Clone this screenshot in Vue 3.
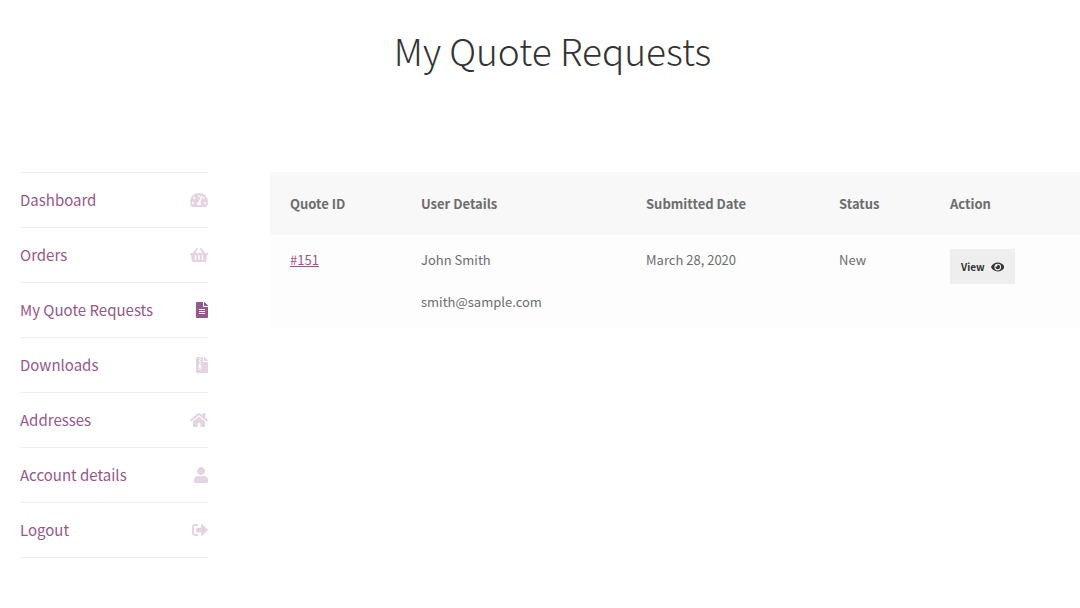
<script setup>
const links = [
  {
    label: 'Dashboard',
    width: 576,
    path: 'M288 32C128.940 32 0 160.940 0 320c0 52.800 14.250 102.260 39.060 144.800 5.610 9.620 16.300 15.200 27.440 15.200h443c11.140 0 21.830-5.580 27.440-15.200C561.750 422.260 576 372.800 576 320c0-159.060-128.940-288-288-288zm0 64c14.710 0 26.580 10.130 30.320 23.650-1.110 2.260-2.640 4.230-3.450 6.670l-9.220 27.670c-5.130 3.490-10.970 6.010-17.640 6.010-17.670 0-32-14.330-32-32S270.330 96 288 96zM96 384c-17.670 0-32-14.330-32-32s14.330-32 32-32 32 14.330 32 32-14.330 32-32 32zm48-160c-17.670 0-32-14.330-32-32s14.330-32 32-32 32 14.330 32 32-14.330 32-32 32zm246.770-72.410l-61.330 184C343.130 347.330 352 364.540 352 384c0 11.720-3.380 22.550-8.880 32H232.880c-5.500-9.450-8.880-20.280-8.880-32 0-33.940 26.500-61.430 59.900-63.590l61.340-184.010c4.170-12.560 17.730-19.450 30.360-15.170 12.570 4.190 19.350 17.790 15.170 30.360zm14.660 57.200l15.520-46.550c3.470-1.290 7.130-2.230 11.050-2.230 17.670 0 32 14.330 32 32s-14.330 32-32 32c-11.380-.010-20.890-6.280-26.570-15.220zM480 384c-17.670 0-32-14.330-32-32s14.330-32 32-32 32 14.330 32 32-14.330 32-32 32z',
  },
  {
    label: 'Orders',
    width: 576,
    path: 'M576 216v16c0 13.255-10.745 24-24 24h-8l-26.113 182.788C514.509 462.435 494.257 480 470.370 480H105.630c-23.887 0-44.139-17.565-47.518-41.212L32 256h-8c-13.255 0-24-10.745-24-24v-16c0-13.255 10.745-24 24-24h67.341l106.780-146.821c10.395-14.292 30.407-17.453 44.701-7.058 14.293 10.395 17.453 30.408 7.058 44.701L170.477 192h235.046L326.120 82.821c-10.395-14.292-7.234-34.306 7.059-44.701 14.291-10.395 34.306-7.235 44.701 7.058L484.659 192H552c13.255 0 24 10.745 24 24zM312 392V280c0-13.255-10.745-24-24-24s-24 10.745-24 24v112c0 13.255 10.745 24 24 24s24-10.745 24-24zm112 0V280c0-13.255-10.745-24-24-24s-24 10.745-24 24v112c0 13.255 10.745 24 24 24s24-10.745 24-24zm-224 0V280c0-13.255-10.745-24-24-24s-24 10.745-24 24v112c0 13.255 10.745 24 24 24s24-10.745 24-24z',
  },
  {
    label: 'My Quote Requests',
    width: 384,
    active: true,
    path: 'M224 136V0H24C10.700 0 0 10.700 0 24v464c0 13.300 10.700 24 24 24h336c13.300 0 24-10.700 24-24V160H248c-13.200 0-24-10.800-24-24zm64 236c0 6.600-5.400 12-12 12H108c-6.600 0-12-5.400-12-12v-8c0-6.600 5.400-12 12-12h168c6.600 0 12 5.400 12 12v8zm0-64c0 6.600-5.400 12-12 12H108c-6.600 0-12-5.400-12-12v-8c0-6.600 5.400-12 12-12h168c6.600 0 12 5.400 12 12v8zm0-72v8c0 6.600-5.400 12-12 12H108c-6.600 0-12-5.400-12-12v-8c0-6.600 5.400-12 12-12h168c6.600 0 12 5.400 12 12zm96-114.100v6.100H256V0h6.100c6.400 0 12.500 2.500 17 7l97.900 98c4.500 4.500 7 10.600 7 16.900z',
  },
  {
    label: 'Downloads',
    width: 384,
    path: 'M377 105L279.100 7c-4.500-4.500-10.600-7-17-7H256v128h128v-6.100c0-6.300-2.500-12.400-7-16.900zM128.400 336c-17.900 0-32.400 12.100-32.400 27 0 15 14.600 27 32.500 27s32.400-12.100 32.400-27-14.600-27-32.500-27zM224 136V0h-63.600v32h-32V0H24C10.700 0 0 10.700 0 24v464c0 13.300 10.700 24 24 24h336c13.300 0 24-10.700 24-24V160H248c-13.200 0-24-10.800-24-24zM95.900 32h32v32h-32zm32.300 384c-33.200 0-58-30.400-51.400-62.900L96.400 256v-32h32v-32h-32v-32h32v-32h-32V96h32V64h32v32h-32v32h32v32h-32v32h32v32h-32v32h22.100c5.700 0 10.700 4.100 11.800 9.700l17.300 87.700c6.400 32.400-18.400 62.600-51.400 62.600z',
  },
  {
    label: 'Addresses',
    width: 576,
    path: 'M280.370 148.260L96 300.110V464a16 16 0 0 0 16 16l112.060-.290a16 16 0 0 0 15.920-16V368a16 16 0 0 1 16-16h64a16 16 0 0 1 16 16v95.640a16 16 0 0 0 16 16.050L464 480a16 16 0 0 0 16-16V300L295.670 148.260a12.190 12.190 0 0 0-15.300 0zM571.600 251.470L488 182.560V44.050a12 12 0 0 0-12-12h-56a12 12 0 0 0-12 12v72.610L318.470 43a48 48 0 0 0-61 0L4.340 251.470a12 12 0 0 0-1.600 16.900l25.500 31A12 12 0 0 0 45.150 301l235.220-193.740a12.190 12.190 0 0 1 15.300 0L530.900 301a12 12 0 0 0 16.900-1.600l25.500-31a12 12 0 0 0-1.700-16.930z',
  },
  {
    label: 'Account details',
    width: 448,
    path: 'M224 256c70.700 0 128-57.300 128-128S294.700 0 224 0 96 57.300 96 128s57.300 128 128 128zm89.600 32h-16.700c-22.200 10.200-46.900 16-72.900 16s-50.600-5.800-72.900-16h-16.700C60.200 288 0 348.200 0 422.400V464c0 26.500 21.500 48 48 48h352c26.500 0 48-21.500 48-48v-41.600c0-74.200-60.200-134.400-134.400-134.400z',
  },
  {
    label: 'Logout',
    width: 512,
    path: 'M497 273L329 441c-15 15-41 4.500-41-17v-96H152c-13.300 0-24-10.700-24-24v-96c0-13.300 10.700-24 24-24h136V88c0-21.400 25.900-32 41-17l168 168c9.300 9.400 9.300 24.600 0 34zM192 436v-40c0-6.600-5.400-12-12-12H96c-17.700 0-32-14.300-32-32V160c0-17.700 14.300-32 32-32h84c6.600 0 12-5.400 12-12V76c0-6.600-5.400-12-12-12H96c-53 0-96 43-96 96v192c0 53 43 96 96 96h84c6.600 0 12-5.400 12-12z',
  },
]

const quotes = [
  { id: 151, name: 'John Smith', email: 'smith@sample.com', date: 'March 28, 2020', status: 'New' },
]
</script>

<template>
  <div class="page">
    <header class="page-header">
      <h1>My Quote Requests</h1>
    </header>
    <div class="account">
      <nav class="account-nav" aria-label="Account pages">
        <ul>
          <li v-for="link in links" :key="link.label" :class="{ active: link.active }">
            <a href="#">
              <span>{{ link.label }}</span>
              <svg class="nav-icon" :viewBox="`0 0 ${link.width} 512`" aria-hidden="true">
                <path :d="link.path" />
              </svg>
            </a>
          </li>
        </ul>
      </nav>
      <main class="account-content">
        <table>
          <colgroup>
            <col class="col-id" />
            <col class="col-user" />
            <col class="col-date" />
            <col class="col-status" />
            <col />
          </colgroup>
          <thead>
            <tr>
              <th scope="col">Quote ID</th>
              <th scope="col">User Details</th>
              <th scope="col">Submitted Date</th>
              <th scope="col">Status</th>
              <th scope="col">Action</th>
            </tr>
          </thead>
          <tbody>
            <tr v-for="quote in quotes" :key="quote.id">
              <td><a class="quote-link" href="#">#{{ quote.id }}</a></td>
              <td>
                <p>{{ quote.name }}</p>
                <p>{{ quote.email }}</p>
              </td>
              <td>{{ quote.date }}</td>
              <td>{{ quote.status }}</td>
              <td>
                <button class="view" type="button">
                  View
                  <svg viewBox="0 0 576 512" aria-hidden="true">
                    <path d="M572.520 241.400C518.290 135.590 410.930 64 288 64S57.680 135.640 3.480 241.410a32.350 32.350 0 0 0 0 29.190C57.710 376.410 165.070 448 288 448s230.320-71.640 284.520-177.410a32.350 32.350 0 0 0 0-29.190zM288 400a144 144 0 1 1 144-144 143.930 143.930 0 0 1-144 144zm0-240a95.310 95.310 0 0 0-25.310 3.790 47.850 47.850 0 0 1-66.900 66.900A95.780 95.780 0 1 0 288 160z" />
                  </svg>
                </button>
              </td>
            </tr>
          </tbody>
        </table>
      </main>
    </div>
  </div>
</template>

<style>
body {
  margin: 0;
  background: #ffffff;
}
</style>

<style scoped>
.page {
  padding-left: 20px;
  color: #6d6d6d;
  font-family: "Source Sans Pro", "Noto Sans CJK SC", "Noto Sans", sans-serif;
  font-size: 14px;
  line-height: 26px;
}

.page-header {
  padding: 22px 0 94px 5px;
  text-align: center;
}

h1 {
  margin: 0;
  color: #333333;
  font-size: 37px;
  font-weight: 300;
  line-height: 56px;
}

.account {
  display: flex;
  align-items: flex-start;
  gap: 62px;
}

.account-nav {
  flex: 0 0 188px;
  font-size: 15px;
}

.account-nav ul {
  margin: 0;
  padding: 0;
  border-top: 1px solid #f0f0f0;
  list-style: none;
}

.account-nav li {
  border-bottom: 1px solid #f0f0f0;
}

.account-nav a {
  display: flex;
  align-items: center;
  justify-content: space-between;
  padding: 14px 0;
  color: #96588a;
  text-decoration: none;
}

.nav-icon {
  height: 16px;
  fill: #96588a;
  opacity: 0.25;
}

.active .nav-icon {
  opacity: 1;
}

.account-content {
  flex: 1;
  min-width: 0;
}

table {
  width: 100%;
  table-layout: fixed;
  border-collapse: collapse;
  font-size: 13px;
  text-align: left;
}

.col-id {
  width: 131px;
}

.col-user {
  width: 225px;
}

.col-date {
  width: 193px;
}

.col-status {
  width: 111px;
}

th {
  padding: 19px 20px 18px;
  background: #f8f8f8;
  font-weight: 600;
}

td {
  padding: 14px 20px 10px;
  background: #fdfdfd;
  line-height: 22px;
  vertical-align: top;
}

p {
  margin: 0 0 20px;
}

p:last-child {
  margin-bottom: 4px;
}

.quote-link {
  color: #96588a;
}

.view {
  display: flex;
  align-items: center;
  gap: 6px;
  padding: 7px 11px;
  border: 0;
  background: #eeeeee;
  color: #333333;
  font-family: inherit;
  font-size: 10px;
  font-weight: 700;
  line-height: 21px;
  cursor: pointer;
}

.view svg {
  height: 12px;
  fill: currentColor;
}
</style>
